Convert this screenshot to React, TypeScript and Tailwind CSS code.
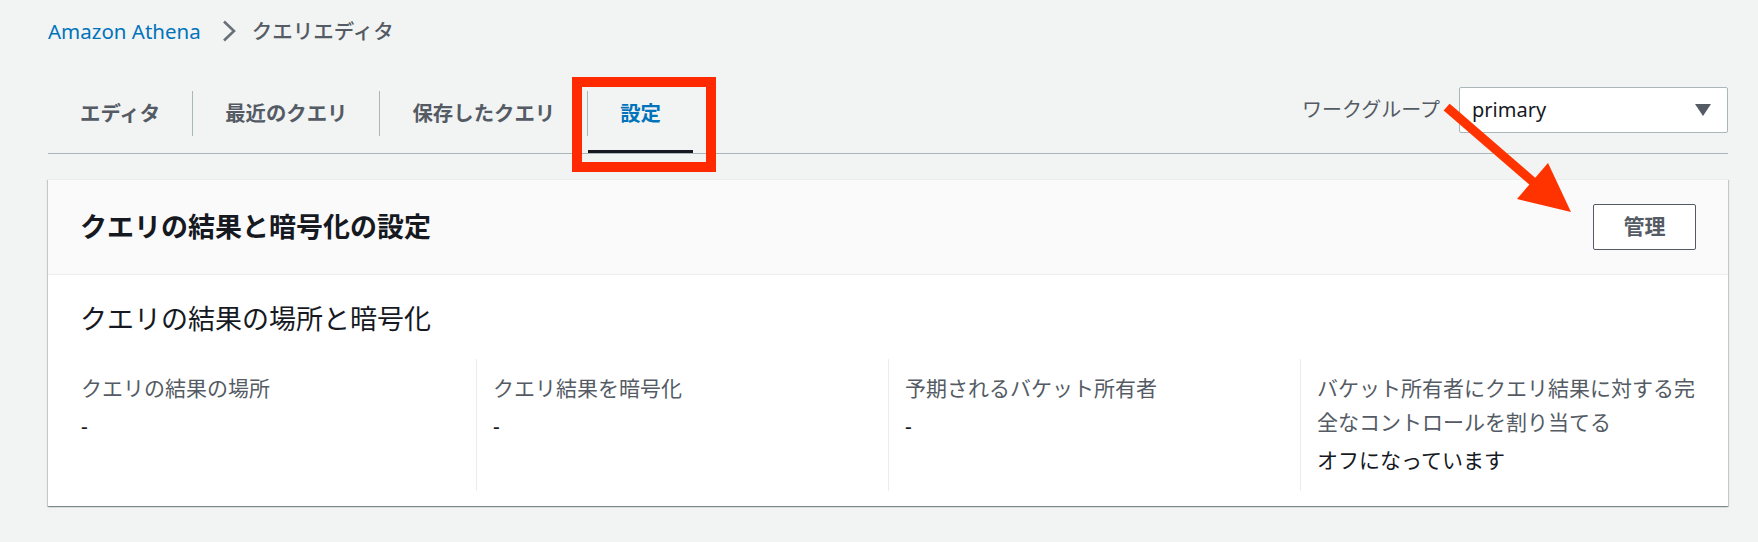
import React from "react";

const tabs = [
  { id: "editor", label: "エディタ" },
  { id: "recent", label: "最近のクエリ" },
  { id: "saved", label: "保存したクエリ" },
  { id: "settings", label: "設定" },
];

const columns = [
  { label: "クエリの結果の場所", value: "-" },
  { label: "クエリ結果を暗号化", value: "-" },
  { label: "予期されるバケット所有者", value: "-" },
  {
    label: "バケット所有者にクエリ結果に対する完全なコントロールを割り当てる",
    value: "オフになっています",
  },
];

const font = { fontFamily: '"Noto Sans", "Noto Sans CJK JP", sans-serif' };

const App = () => {
  const active = "settings";

  return (
    <main
      className="relative min-h-[542px] w-full bg-[#f2f3f3] pl-[48px] pr-[30px] pt-[16px] text-[#16191f]"
      style={font}
    >
      {/* breadcrumb */}
      <nav className="flex h-[30px] items-center text-[20.5px] leading-[30px]">
        <span className="text-[#0073bb]">Amazon Athena</span>
        <svg className="ml-[21px] mr-[16px] h-[22px] w-[14px]" viewBox="0 0 14 22" fill="none">
          <path d="M2 1.5 L12 11 L2 20.5" stroke="#687078" strokeWidth="2.6" />
        </svg>
        <span className="font-medium text-[#545b64]">クエリエディタ</span>
      </nav>

      {/* tabs + workgroup */}
      <div className="mt-[27px] flex items-center justify-between border-b border-[#aab7b8]">
        <div className="flex items-center">
          {tabs.map((tab, i) => (
            <React.Fragment key={tab.id}>
              {i > 0 && <div className="h-[45px] w-px bg-[#aab7b8]" />}
              <div
                className={`flex h-[80px] items-center border-b-[3px] px-8 pt-[3px] text-[20.4px] font-bold ${
                  tab.id === active
                    ? "border-[#16191f] text-[#0073bb]"
                    : "border-transparent text-[#545b64]"
                }`}
              >
                {tab.label}
              </div>
            </React.Fragment>
          ))}
        </div>

        <div className="mb-[6px] flex items-center gap-[19px]">
          <span className="text-[20px] text-[#545b64]">ワークグループ</span>
          <div className="flex h-[46px] w-[269px] items-center justify-between rounded-[2px] border border-[#aab7b8] bg-white pl-[12px] pr-[16px]">
            <span className="text-[20px] text-[#16191f]">primary</span>
            <svg className="h-[12px] w-[16px]" viewBox="0 0 16 12">
              <path d="M0 0 H16 L8 12 Z" fill="#545b64" />
            </svg>
          </div>
        </div>
      </div>

      {/* settings card */}
      <section className="mt-[25px] border-t border-[#eaeded] bg-white shadow-[0_1px_1px_0_rgba(0,28,36,0.3),1px_1px_1px_0_rgba(0,28,36,0.15),-1px_1px_1px_0_rgba(0,28,36,0.15)]">
        <header className="flex items-center justify-between border-b border-[#eaeded] bg-[#fafafa] px-8 py-6">
          <h2 className="text-[27px] font-bold leading-[36px] text-[#16191f]">
            クエリの結果と暗号化の設定
          </h2>
          <button className="h-[46px] w-[103px] rounded-[2px] border border-[#545b64] bg-white text-[21px] font-bold text-[#545b64]">
            管理
          </button>
        </header>

        <div className="px-4 pb-[15px] pt-[26px]">
          <h3 className="px-4 text-[27px] leading-[36px] text-[#16191f]">
            クエリの結果の場所と暗号化
          </h3>
          <div className="mt-[22px] grid grid-cols-4">
            {columns.map((col, i) => (
              <div
                key={col.label}
                className={`flex flex-col gap-[6px] px-4 pb-[15px] pt-[12px] ${
                  i > 0 ? "border-l border-[#eaeded]" : "border-l border-transparent"
                }`}
              >
                <span className="text-[21px] leading-[34px] text-[#545b64]">{col.label}</span>
                <span className="text-[21px] leading-[31px] text-[#16191f]">{col.value}</span>
              </div>
            ))}
          </div>
        </div>
      </section>

      {/* annotations */}
      <div className="pointer-events-none absolute left-[572px] top-[77px] h-[95px] w-[144px] border-[10px] border-[#ff2a00]" />
      <svg
        className="pointer-events-none absolute left-0 top-0"
        width="1758"
        height="542"
        viewBox="0 0 1758 542"
      >
        <path d="M1450 110 L1532 181" stroke="#ff3300" strokeWidth="9" strokeLinecap="square" />
        <path d="M1517 199 L1548 163 L1571 212 Z" fill="#ff3300" />
      </svg>
    </main>
  );
};

export default App;
